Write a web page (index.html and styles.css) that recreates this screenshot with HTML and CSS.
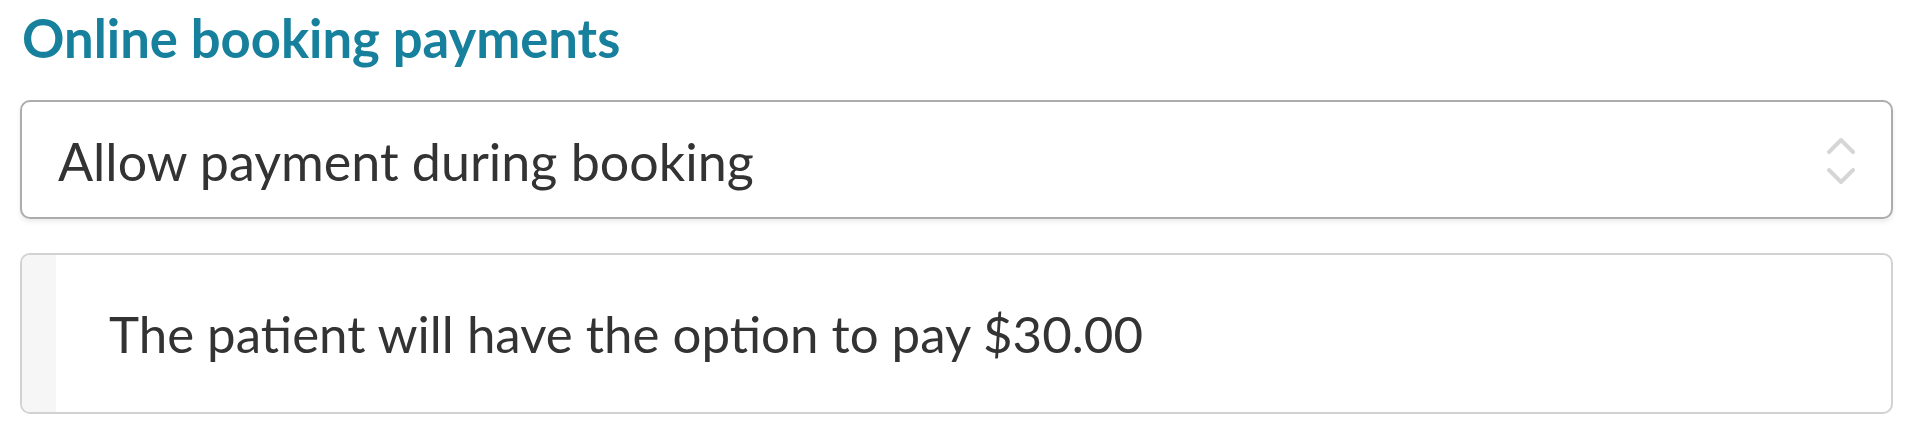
FILE: index.html
```html
<!DOCTYPE html>
<html lang="en">
<head>
    <meta charset="UTF-8">
    <meta name="viewport" content="width=device-width, initial-scale=1.0">
    <title>Online booking payments</title>
    <link rel="stylesheet" href="styles.css">
</head>
<body>
    <div class="container">
        <h2 class="title">Online booking payments</h2>
        <div class="select">
            <span class="select-value">Allow payment during booking</span>
            <svg class="select-arrows" width="28" height="52" viewBox="0 0 28 52">
                <polyline points="2,17 14,5 26,17" fill="none" stroke="#d6d6d6" stroke-width="4" stroke-linecap="round" stroke-linejoin="round"/>
                <polyline points="2,35 14,47 26,35" fill="none" stroke="#d6d6d6" stroke-width="4" stroke-linecap="round" stroke-linejoin="round"/>
            </svg>
        </div>
        <div class="notice">
            <div class="notice-strip"></div>
            <p class="notice-text">The patient will have the option to pay $30.00</p>
        </div>
    </div>
</body>
</html>
```

FILE: styles.css
```css
body {
    margin: 0;
    font-family: Lato, "Noto Sans", sans-serif;
    background: #fff;
    color: #333;
}
.container {
    padding: 6px 25px 0 20px;
}
.title {
    margin: 0;
    padding-left: 2px;
    font-size: 52.6px;
    font-weight: 700;
    line-height: 1.2;
    color: #17809c;
}
.select {
    margin-top: 31px;
    height: 115px;
    box-sizing: content-box;
    border: 2px solid #acacac;
    border-radius: 10px;
    box-shadow: 0 3px 5px rgba(0, 0, 0, 0.08);
    display: flex;
    justify-content: space-between;
    align-items: center;
    padding: 0 36px 0 36px;
}
.select-value {
    font-size: 52px;
    line-height: 1.2;
    padding-top: 3px;
}
.select-arrows {
    margin-top: 2px;
}
.notice {
    margin-top: 34px;
    height: 157px;
    border: 2px solid #d2d2d2;
    border-radius: 10px;
    display: flex;
    overflow: hidden;
}
.notice-strip {
    width: 34px;
    background: #f6f6f6;
}
.notice-text {
    margin: 0;
    padding-left: 53px;
    align-self: center;
    font-size: 51px;
    line-height: 1.2;
}
```
